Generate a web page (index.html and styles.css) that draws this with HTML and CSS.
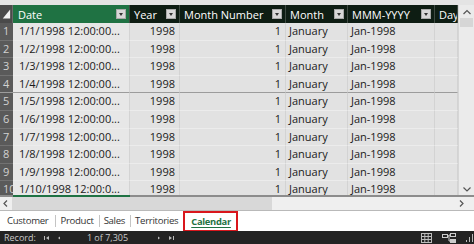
FILE: index.html
```html
<!DOCTYPE html>
<html>
<head>
<meta charset="utf-8">
<link rel="stylesheet" href="styles.css">
</head>
<body>
<div class="app">
  <div class="topstrip"></div>
  <div class="body">
    <div class="sheet">
      <div class="row head">
        <div class="hc corner"><svg width="13" height="18" viewBox="0 0 13 18"><polygon points="3,14 11,14 11,4" fill="#f2f2f2"/></svg></div>
        <div class="hc sel"><span>Date</span><i class="dd"></i></div>
        <div class="hc"><span>Year</span><i class="dd"></i></div>
        <div class="hc"><span>Month Number</span><i class="dd"></i></div>
        <div class="hc"><span>Month</span><i class="dd"></i></div>
        <div class="hc"><span>MMM-YYYY</span><i class="dd"></i></div>
        <div class="hc"><span>Day</span></div>
      </div>
      <div class="row"><div class="rn">1</div><div class="c date">1/1/1998 12:00:00...</div><div class="c r">1998</div><div class="c r">1</div><div class="c">January</div><div class="c">Jan-1998</div><div class="c"></div></div>
      <div class="row"><div class="rn">2</div><div class="c date">1/2/1998 12:00:00...</div><div class="c r">1998</div><div class="c r">1</div><div class="c">January</div><div class="c">Jan-1998</div><div class="c"></div></div>
      <div class="row"><div class="rn">3</div><div class="c date">1/3/1998 12:00:00...</div><div class="c r">1998</div><div class="c r">1</div><div class="c">January</div><div class="c">Jan-1998</div><div class="c"></div></div>
      <div class="row sep"><div class="rn">4</div><div class="c date">1/4/1998 12:00:00...</div><div class="c r">1998</div><div class="c r">1</div><div class="c">January</div><div class="c">Jan-1998</div><div class="c"></div></div>
      <div class="row"><div class="rn">5</div><div class="c date">1/5/1998 12:00:00...</div><div class="c r">1998</div><div class="c r">1</div><div class="c">January</div><div class="c">Jan-1998</div><div class="c"></div></div>
      <div class="row"><div class="rn">6</div><div class="c date">1/6/1998 12:00:00...</div><div class="c r">1998</div><div class="c r">1</div><div class="c">January</div><div class="c">Jan-1998</div><div class="c"></div></div>
      <div class="row"><div class="rn">7</div><div class="c date">1/7/1998 12:00:00...</div><div class="c r">1998</div><div class="c r">1</div><div class="c">January</div><div class="c">Jan-1998</div><div class="c"></div></div>
      <div class="row"><div class="rn">8</div><div class="c date">1/8/1998 12:00:00...</div><div class="c r">1998</div><div class="c r">1</div><div class="c">January</div><div class="c">Jan-1998</div><div class="c"></div></div>
      <div class="row"><div class="rn">9</div><div class="c date">1/9/1998 12:00:00...</div><div class="c r">1998</div><div class="c r">1</div><div class="c">January</div><div class="c">Jan-1998</div><div class="c"></div></div>
      <div class="row"><div class="rn">10</div><div class="c date">1/10/1998 12:00:0...</div><div class="c r">1998</div><div class="c r">1</div><div class="c">January</div><div class="c">Jan-1998</div><div class="c"></div></div>
    </div>
    <div class="vscroll">
      <svg class="chev" width="16" height="12" viewBox="0 0 16 12"><polyline points="4.5,8 8,4.5 11.5,8" fill="none" stroke="#555" stroke-width="1.2"/></svg>
      <div class="vthumb"></div>
      <div class="vfill"></div>
      <svg class="chev" width="16" height="12" viewBox="0 0 16 12"><polyline points="4.5,4.5 8,8 11.5,4.5" fill="none" stroke="#555" stroke-width="1.2"/></svg>
    </div>
  </div>
  <div class="focusline"><div class="focusgreen"></div></div>
  <div class="hscroll">
    <svg width="11" height="13" viewBox="0 0 11 13"><polyline points="7,3.5 4,6.5 7,9.5" fill="none" stroke="#555" stroke-width="1.2"/></svg>
    <div class="hthumb"></div>
    <div class="hfill"></div>
    <svg width="20" height="13" viewBox="0 0 20 13"><polyline points="6,3.5 9,6.5 6,9.5" fill="none" stroke="#555" stroke-width="1.2"/></svg>
  </div>
  <div class="tabs">
    <span class="tab">Customer</span>
    <span class="tab">Product</span>
    <span class="tab">Sales</span>
    <span class="tab">Territories</span>
    <span class="tab active"><u>Calendar</u></span>
  </div>
  <div class="status">
    <span class="rec">Record:</span>
    <svg class="nav" width="8" height="6" viewBox="0 0 8 6"><rect x="1" y="1" width="1" height="4" fill="#bbb"/><polygon points="6,1 3,3 6,5" fill="#bbb"/></svg>
    <svg class="nav n2" width="6" height="6" viewBox="0 0 6 6"><polygon points="4,1.5 2,3 4,4.5" fill="#bbb"/></svg>
    <span class="count">1 of 7,305</span>
    <svg class="nav n3" width="6" height="6" viewBox="0 0 6 6"><polygon points="2,1.5 4,3 2,4.5" fill="#bbb"/></svg>
    <svg class="nav n4" width="8" height="6" viewBox="0 0 8 6"><polygon points="2,1 5,3 2,5" fill="#bbb"/><rect x="6" y="1" width="1" height="4" fill="#bbb"/></svg>
    <span class="grow"></span>
    <svg class="ico" width="11" height="10" viewBox="0 0 11 10"><rect x="0.5" y="0.5" width="10" height="9" fill="none" stroke="#bbb"/><line x1="0.5" y1="3.5" x2="10.5" y2="3.5" stroke="#bbb"/><line x1="0.5" y1="6.5" x2="10.5" y2="6.5" stroke="#bbb"/><line x1="3.8" y1="0.5" x2="3.8" y2="9.5" stroke="#bbb"/><line x1="7.2" y1="0.5" x2="7.2" y2="9.5" stroke="#bbb"/></svg>
    <svg class="ico i2" width="14" height="10" viewBox="0 0 14 10"><rect x="0.5" y="1.5" width="5" height="3" fill="none" stroke="#ccc"/><rect x="8.5" y="0.5" width="5" height="3" fill="none" stroke="#ccc"/><rect x="8.5" y="6.5" width="5" height="3" fill="#ccc" stroke="#ccc"/><polyline points="5.5,3 7,3 7,2 8.5,2" fill="none" stroke="#ccc"/><polyline points="7,3 7,8 8.5,8" fill="none" stroke="#ccc"/></svg>
    <svg class="ico i3" width="9" height="10" viewBox="0 0 9 10"><rect x="1" y="7" width="1" height="2" fill="#bbb"/><rect x="4" y="4" width="1" height="5" fill="#bbb"/><rect x="7" y="1" width="1" height="8" fill="#bbb"/></svg>
  </div>
</div>
</body>
</html>
```
FILE: styles.css
```css
* { box-sizing: border-box; }
html, body { margin: 0; padding: 0; }
body { width: 474px; height: 244px; overflow: hidden; background: #fff; font-family: "Open Sans", "Noto Sans", sans-serif; }
.app { width: 474px; height: 244px; display: flex; flex-direction: column; overflow: hidden; }
.topstrip { height: 5px; background: #e4e4e4; flex: none; }
.body { height: 190px; display: flex; flex: none; overflow: hidden; background: #e2e2e2; }
.sheet { width: 458px; flex: none; overflow: hidden; }
.row { display: grid; grid-template-columns: 13px 117px 50px 106px 62px 87px 23px; height: 17.6px; }
.row.head { height: 18px; }
.hc { background: #0e1d13; color: #fff; font-size: 11px; display: flex; align-items: center; justify-content: space-between; padding: 0 3px 0 4px; border-right: 1px solid #3e4a42; white-space: nowrap; overflow: hidden; }
.hc.sel { background: #1f7243; padding-left: 5px; }
.hc.corner { background: #4a4a4a; padding: 0; border-right: 1px solid #6a6a6a; }
.dd { width: 10px; height: 10px; background: #d8d8d8; border: 1px solid #a9a9a9; flex: none; display: flex; align-items: center; justify-content: center; }
.dd::after { content: ""; border-left: 2.5px solid transparent; border-right: 2.5px solid transparent; border-top: 3px solid #333; }
.rn { background: #5a5a5a; color: #d2d2d2; font-size: 11px; line-height: 16.6px; padding-left: 3px; border-bottom: 1px solid #727272; white-space: nowrap; overflow: hidden; }
.c { background: #e2e2e2; color: #1b1b1b; font-size: 11px; line-height: 16.6px; padding: 0 3px; border-bottom: 1px solid #ececec; border-right: 1px solid #d3d3d3; white-space: nowrap; overflow: hidden; }
.c.date { background: #e7e7e7; padding-left: 6px; }
.c.r { text-align: right; padding-right: 4px; }
.row.sep .c, .row.sep .rn { border-bottom: 1px solid #9c9c9c; }
.vscroll { width: 16px; flex: none; background: #ebebeb; display: flex; flex-direction: column; border-left: 1px solid #d6d6d6; }
.chev { flex: none; display: block; margin-top: 1px; }
.vthumb { height: 9px; background: #d6d6d6; margin: 0 1px; flex: none; }
.vfill { flex: 1; }
.focusline { height: 2px; background: #8c8c8c; flex: none; padding-left: 13px; }
.focusgreen { width: 117px; height: 2px; background: #1f7243; }
.hscroll { height: 14px; flex: none; background: #efefef; display: flex; align-items: center; border-bottom: 1px solid #b9b9b9; }
.hscroll svg { flex: none; display: block; }
.hthumb { width: 260px; height: 13px; background: #d8d8d8; flex: none; margin-left: 1px; }
.hfill { flex: 1; }
.tabs { height: 20px; flex: none; background: #fff; display: flex; align-items: center; padding-left: 3px; }
.tab { font-size: 9.6px; letter-spacing: -0.3px; color: #333; padding: 0 4px; line-height: 12px; border-left: 1px solid #c4c4c4; }
.tab:first-child { border-left: none; padding-left: 4px; padding-right: 7px; }
.tab:nth-child(2) { padding-right: 5px; }
.tab:nth-child(3) { padding-right: 5px; padding-left: 4px; }
.tab.active { border: 2px solid #d9161c; color: #1f7243; font-weight: bold; font-size: 9.4px; letter-spacing: -0.3px; padding: 2px 5px 2px 6px; line-height: 13px; margin-left: 1px; }
.tab.active u { text-decoration-color: #1f7243; text-underline-offset: 2px; }
.status { height: 13px; flex: none; background: #232323; color: #c9c9c9; font-size: 9px; display: flex; align-items: center; padding-left: 4px; }
.rec { line-height: 13px; }
.nav { flex: none; display: block; margin-left: 7px; }
.nav.n2 { margin-left: 5px; }
.count { margin-left: 25px; }
.nav.n3 { margin-left: 28px; }
.nav.n4 { margin-left: 5px; }
.grow { flex: 1; }
.ico { flex: none; display: block; }
.ico.i2 { margin-left: 10px; }
.ico.i3 { margin-left: 9px; }
```
